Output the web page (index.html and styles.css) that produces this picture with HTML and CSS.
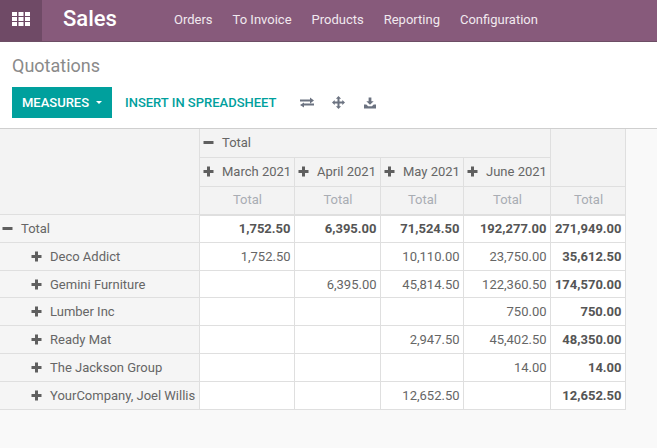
FILE: index.html
```html
<!DOCTYPE html>
<html lang="en">
<head>
<meta charset="utf-8">
<title>Quotations</title>
<link rel="stylesheet" href="styles.css">
</head>
<body>
<svg class="defs" width="0" height="0" aria-hidden="true">
  <symbol id="plus" viewBox="0 0 11 11"><path d="M4 0.500h3v3.500h3.500v3h-3.500v3.500h-3v-3.500h-3.500v-3h3.500z"/></symbol>
  <symbol id="minus" viewBox="0 0 11 11"><path d="M0.500 4h10v3h-10z"/></symbol>
</svg>
<header class="navbar">
  <a class="apps">
    <svg width="18" height="14" viewBox="0 0 18 14"><path d="M0 0h5v4h-5zM6.500 0h5v4h-5zM13 0h5v4h-5zM0 5h5v4h-5zM6.500 5h5v4h-5zM13 5h5v4h-5zM0 10h5v4h-5zM6.500 10h5v4h-5zM13 10h5v4h-5z"/></svg>
  </a>
  <span class="brand">Sales</span>
  <nav class="menu">
    <a>Orders</a><a>To Invoice</a><a>Products</a><a>Reporting</a><a>Configuration</a>
  </nav>
</header>
<section class="panel">
  <h1 class="title">Quotations</h1>
  <div class="actions">
    <button class="btn-primary">MEASURES<i class="caret"></i></button>
    <button class="btn-link">INSERT IN SPREADSHEET</button>
    <div class="tools">
      <svg width="14" height="12" viewBox="0 0 14 12"><path d="M0 2.500h10v-2l4 3-4 3v-2h-10zM14 6.500v2h-10v2l-4-2.500 4-2.500v1z"/></svg>
      <svg width="13" height="13" viewBox="0 0 13 13"><path d="M6.500 0l2.600 2.700h-1.600v2.800h2.800v-1.600l2.700 2.600-2.700 2.600v-1.600h-2.800v2.800h1.600l-2.600 2.700-2.600-2.700h1.600v-2.800h-2.800v1.600l-2.700-2.600 2.700-2.600v1.600h2.800v-2.800h-1.600z"/></svg>
      <svg width="12" height="12" viewBox="0 0 13 12"><path d="M5 0h3v4h2.500l-4 4-4-4h2.500zM0 7.500h2.500l2 2h4l2-2h2.500v4.500h-13z"/></svg>
    </div>
  </div>
</section>
<main class="content">
  <table class="pivot">
    <colgroup><col class="c0"><col class="c1"><col class="c2"><col class="c3"><col class="c4"><col class="c5"></colgroup>
    <thead>
      <tr>
        <th class="blank" rowspan="3"></th>
        <th colspan="4" class="head"><svg class="ic"><use href="#minus"/></svg>Total</th>
        <th class="blank" rowspan="2"></th>
      </tr>
      <tr>
        <th class="head"><svg class="ic"><use href="#plus"/></svg>March 2021</th>
        <th class="head"><svg class="ic"><use href="#plus"/></svg>April 2021</th>
        <th class="head"><svg class="ic"><use href="#plus"/></svg>May 2021</th>
        <th class="head"><svg class="ic"><use href="#plus"/></svg>June 2021</th>
      </tr>
      <tr class="measures">
        <th>Total</th><th>Total</th><th>Total</th><th>Total</th><th>Total</th>
      </tr>
    </thead>
    <tbody>
      <tr class="grand"><th class="row0"><svg class="ic"><use href="#minus"/></svg>Total</th><td>1,752.50</td><td>6,395.00</td><td>71,524.50</td><td>192,277.00</td><td>271,949.00</td></tr>
      <tr><th class="row1"><svg class="ic"><use href="#plus"/></svg>Deco Addict</th><td>1,752.50</td><td></td><td>10,110.00</td><td>23,750.00</td><td class="sum">35,612.50</td></tr>
      <tr><th class="row1"><svg class="ic"><use href="#plus"/></svg>Gemini Furniture</th><td></td><td>6,395.00</td><td>45,814.50</td><td>122,360.50</td><td class="sum">174,570.00</td></tr>
      <tr><th class="row1"><svg class="ic"><use href="#plus"/></svg>Lumber Inc</th><td></td><td></td><td></td><td>750.00</td><td class="sum">750.00</td></tr>
      <tr><th class="row1"><svg class="ic"><use href="#plus"/></svg>Ready Mat</th><td></td><td></td><td>2,947.50</td><td>45,402.50</td><td class="sum">48,350.00</td></tr>
      <tr><th class="row1"><svg class="ic"><use href="#plus"/></svg>The Jackson Group</th><td></td><td></td><td></td><td>14.00</td><td class="sum">14.00</td></tr>
      <tr><th class="row1"><svg class="ic"><use href="#plus"/></svg>YourCompany, Joel Willis</th><td></td><td></td><td>12,652.50</td><td></td><td class="sum">12,652.50</td></tr>
    </tbody>
  </table>
</main>
</body>
</html>
```
FILE: styles.css
```css
* { box-sizing: border-box; }
html, body { margin: 0; height: 100%; }
body {
  display: flex;
  flex-direction: column;
  overflow: hidden;
  font-family: Roboto, "Liberation Sans", sans-serif;
  font-size: 13px;
  line-height: 1.5;
  color: #666;
  background: #f9f9f9;
}
.defs { position: absolute; }
.navbar {
  display: flex;
  align-items: center;
  flex: none;
  height: 42px;
  background: #875a7b;
  border-bottom: 1px solid #6d4e65;
  color: #fff;
}
.apps {
  display: flex;
  align-items: center;
  justify-content: center;
  width: 42px;
  height: 41px;
  background: #6f4a66;
}
.apps svg { fill: #fff; margin-top: -3px; margin-right: 1px; }
.brand {
  margin-left: 21px;
  width: 111px;
  font-size: 22px;
  font-weight: 500;
  line-height: 1;
  margin-top: -3px;
}
.menu { display: flex; gap: 20px; margin-top: -1px; }
.menu a { color: #f1e9ef; font-size: 13px; font-weight: 400; }
.panel {
  flex: none;
  height: 87px;
  background: #fff;
  border-bottom: 1px solid #cfcfcf;
  padding: 12px 12px 0;
}
.title {
  margin: 0;
  font-size: 18px;
  font-weight: 400;
  line-height: 24px;
  color: #8a8a8a;
}
.actions { display: flex; align-items: center; margin-top: 9px; }
.btn-primary, .btn-link {
  border: 0;
  font: 500 13px/1.5 Roboto, "Liberation Sans", sans-serif;
  height: 31px;
  padding: 0;
}
.btn-primary {
  display: flex;
  align-items: center;
  justify-content: center;
  width: 100px;
  background: #00a09d;
  color: #fff;
}
.caret {
  margin-left: 7px;
  margin-top: -1px;
  border-top: 3px solid #fff;
  border-left: 3px solid transparent;
  border-right: 3px solid transparent;
}
.btn-link { margin-left: 13px; background: none; color: #00a09d; }
.tools { display: flex; align-items: center; gap: 18px; margin-left: 23px; }
.tools svg:last-child { margin-left: 1px; }
.tools svg { fill: #6b7280; }
.content { flex: 1; }
.pivot {
  table-layout: fixed;
  width: 625px;
  border-collapse: collapse;
}
.c0 { width: 199px; }
.c1 { width: 95px; }
.c2 { width: 86px; }
.c3 { width: 83px; }
.c4 { width: 87px; }
.c5 { width: 75px; }
.pivot th, .pivot td {
  border: 1px solid #dfdfdf;
  padding: 3.400px 3px 2.600px 4px;
  height: 27.800px;
  white-space: nowrap;
  font-weight: 400;
}
.pivot thead th {
  height: 28.500px;
  padding: 3px 4px;
  background: #f3f3f3;
  text-align: left;
  padding-left: 3.500px;
}
.pivot thead th.blank { background: #f3f3f3; }
.pivot tr:first-child th { border-top: 0; }
.pivot th:first-child { border-left: 0; }
.pivot thead tr.measures th {
  padding-left: 5px;
  padding-right: 3px;
  color: #a9adb3;
  text-align: center;
  border-bottom: 2px solid #dfdfdf;
}
.head { color: #666; }
.ic { width: 11px; height: 11px; fill: #5f5f5f; margin-right: 8px; vertical-align: -1px; }
.pivot tbody th {
  background: #f5f5f5;
  text-align: left;
}
.pivot tbody th.row0 { padding-left: 2px; }
.pivot tbody th.row1 { padding-left: 31px; }
.pivot tbody td { background: #fff; text-align: right; }
.grand td, .sum { font-weight: 700 !important; color: #555; }
```
